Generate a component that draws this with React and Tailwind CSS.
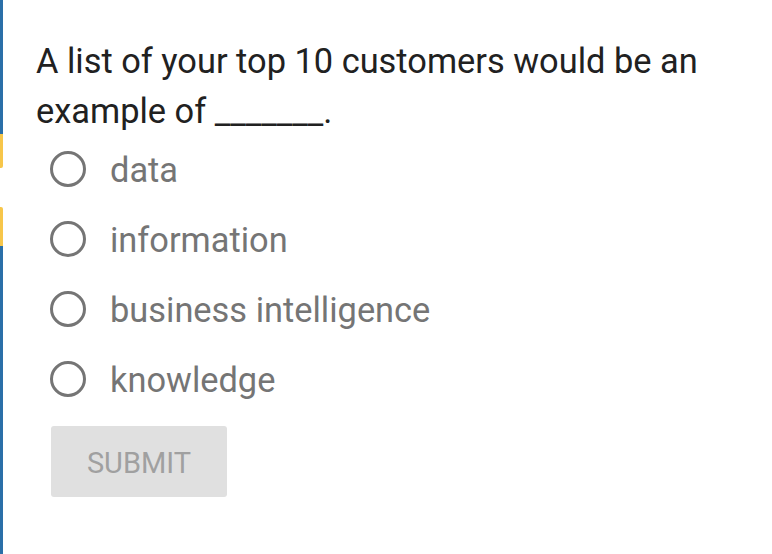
import { useState } from "react";

const options = ["data", "information", "business intelligence", "knowledge"];

function Radio({ checked }) {
  return (
    <span className="flex h-[36px] w-[36px] shrink-0 items-center justify-center rounded-full border-[3.5px] border-[#757575]">
      {checked && <span className="h-[18px] w-[18px] rounded-full bg-[#757575]" />}
    </span>
  );
}

export default function App() {
  const [picked, setPicked] = useState(null);

  return (
    <div className="flex h-[554px] w-full bg-white font-['Roboto',sans-serif]">
      {/* left edge marker */}
      <div className="flex w-[3px] flex-col">
        <div className="h-[134px] bg-[#2a6fa8]" />
        <div className="h-[34px] rounded-br-[2px] bg-[#f7c64a]" />
        <div className="h-[39px] bg-white" />
        <div className="h-[39px] rounded-tr-[2px] bg-[#f7c64a]" />
        <div className="flex-1 bg-[#2a6fa8]" />
      </div>

      <div className="flex flex-1 flex-col pl-[33px] pt-[36px]">
        <p className="text-[34.4px] leading-[50px] text-[#212121]">
          A list of your top 10 customers would be an
          <br />
          example of _______.
        </p>

        <div className="mt-[-2px] flex flex-col pl-[14px]">
          {options.map((opt, i) => (
            <button
              key={opt}
              onClick={() => setPicked(i)}
              className="flex h-[70px] items-center gap-[24px] text-left"
            >
              <Radio checked={picked === i} />
              <span className="pt-[4px] text-[34.4px] text-[#757575]">{opt}</span>
            </button>
          ))}
        </div>

        <button
          disabled={picked === null}
          className="ml-[15px] mt-[12px] flex h-[71px] w-[176px] items-center justify-center rounded-[3px] bg-[#e0e0e0] pt-[4px] text-[29px] text-[#a0a0a0]"
        >
          SUBMIT
        </button>
      </div>
    </div>
  );
}
